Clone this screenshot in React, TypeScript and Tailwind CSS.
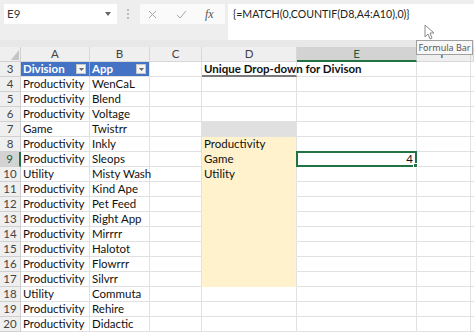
import React from "react";

const cols = ["A", "B", "C", "D", "E", "F", ""];

type Row = { n: number; a: string; b: string; d?: string; e?: string };

const rows: Row[] = [
  { n: 4, a: "Productivity", b: "WenCaL" },
  { n: 5, a: "Productivity", b: "Blend" },
  { n: 6, a: "Productivity", b: "Voltage" },
  { n: 7, a: "Game", b: "Twistrr" },
  { n: 8, a: "Productivity", b: "Inkly", d: "Productivity" },
  { n: 9, a: "Productivity", b: "Sleops", d: "Game", e: "4" },
  { n: 10, a: "Utility", b: "Misty Wash", d: "Utility" },
  { n: 11, a: "Productivity", b: "Kind Ape" },
  { n: 12, a: "Productivity", b: "Pet Feed" },
  { n: 13, a: "Productivity", b: "Right App" },
  { n: 14, a: "Productivity", b: "Mirrrr" },
  { n: 15, a: "Productivity", b: "Halotot" },
  { n: 16, a: "Productivity", b: "Flowrrr" },
  { n: 17, a: "Productivity", b: "Silvrr" },
  { n: 18, a: "Utility", b: "Commuta" },
  { n: 19, a: "Productivity", b: "Rehire" },
  { n: 20, a: "Productivity", b: "Didactic" },
];

const gridCols = "grid grid-cols-[21px_69px_60px_52px_95px_120px_54px_1fr]";
const cell = "h-[15px] border-r border-b border-[#e1e1e1] px-[2px] leading-[14px] whitespace-nowrap overflow-visible";

function DropBtn() {
  return (
    <span className="ml-auto mr-[3px] flex h-[10px] w-[10px] items-center justify-center bg-[#f4f4f4] border border-[#c8c8c8]">
      <svg width="5" height="3" viewBox="0 0 5 3">
        <path d="M0 0 L5 0 L2.5 3 Z" fill="#666" />
      </svg>
    </span>
  );
}

export default function App() {
  return (
    <div
      className="relative h-[332px] w-[474px] overflow-hidden bg-white text-[11.5px] text-[#111]"
      style={{ fontFamily: "Lato, 'Noto Sans', sans-serif" }}
    >
      {/* Toolbar */}
      <div className="h-[47px] bg-[#eeeeee] flex flex-col">
        <div className="flex items-start pt-[4px] h-[40px]">
          <div className="ml-[4px] flex h-[20px] w-[113px] items-center bg-white pl-[3px] text-[#333]">
            <span>E9</span>
            <svg className="ml-auto mr-[6px]" width="6" height="4" viewBox="0 0 6 4">
              <path d="M0 0 L6 0 L3 4 Z" fill="#666" />
            </svg>
          </div>
          <div className="ml-[10px] mt-[5px] flex flex-col gap-[2px]">
            <span className="block h-[2px] w-[2px] bg-[#bbb]" />
            <span className="block h-[2px] w-[2px] bg-[#bbb]" />
            <span className="block h-[2px] w-[2px] bg-[#bbb]" />
          </div>
          <div className="ml-[11px] flex h-[20px] w-[85px] items-center bg-[#fafafa]">
            <svg className="ml-[8px]" width="9" height="9" viewBox="0 0 9 9">
              <path d="M1 1 L8 8 M8 1 L1 8" stroke="#a6a6a6" strokeWidth="1" />
            </svg>
            <svg className="ml-[19px]" width="11" height="9" viewBox="0 0 11 9">
              <path d="M1 5 L4 8 L10 1" stroke="#a6a6a6" strokeWidth="1" fill="none" />
            </svg>
            <span
              className="ml-[18px] text-[12px] italic text-[#555]"
              style={{ fontFamily: "'Liberation Serif', serif" }}
            >
              fx
            </span>
          </div>
          <div className="ml-[3px] h-[36px] flex-1 bg-white pl-[5px] pt-[3px] text-[10.6px] leading-[14px] text-[#222]">
            {"{=MATCH(0,COUNTIF(D8,A4:A10),0)}"}
          </div>
        </div>
        <div className="flex-1 bg-[#e8e8e8]" />
      </div>

      {/* Column headers */}
      <div className={`${gridCols} bg-[#efefef] text-[#444]`}>
        <div className="relative h-[15px] border-r border-b border-[#d0d0d0]">
          <svg className="absolute right-[1px] bottom-[1px]" width="8" height="10" viewBox="0 0 8 10">
            <path d="M8 0 L8 10 L0 10 Z" fill="#c4c4c4" />
          </svg>
        </div>
        {cols.map((c, i) => (
          <div
            key={i}
            className={
              c === "E"
                ? "h-[15px] border-r border-[#d0d0d0] border-b-2 border-b-[#217346] bg-[#d3d3d3] text-center leading-[14px] text-[#1e5c38]"
                : "h-[15px] border-r border-b border-[#d8d8d8] text-center leading-[14px]"
            }
          >
            {c}
          </div>
        ))}
      </div>

      {/* Row 3 */}
      <div className={gridCols}>
        <div className="h-[15px] border-r border-b border-[#d0d0d0] bg-[#efefef] text-center leading-[14px] text-[#444]">3</div>
        <div className="flex h-[15px] items-center border-r border-b border-r-[#8eaadb] border-b-[#e1e1e1] bg-[#4472c4] pl-[2px] font-bold text-white">
          <span>Division</span>
          <DropBtn />
        </div>
        <div className="flex h-[15px] items-center border-r border-b border-[#e1e1e1] bg-[#4472c4] pl-[2px] font-bold text-white">
          <span>App</span>
          <DropBtn />
        </div>
        <div className={cell} />
        <div className="h-[15px] border-r border-r-[#e1e1e1] border-b-2 border-b-[#7a7a7a] px-[2px] leading-[14px] whitespace-nowrap font-bold">
          Unique Drop-down for Divison
        </div>
        <div className={cell} />
        <div className={cell} />
        <div className={cell} />
      </div>

      {rows.map((r) => {
        const sel = r.n === 9;
        const yellow = r.n >= 8 && r.n <= 17;
        const gray = r.n === 7;
        return (
          <div key={r.n} className={gridCols}>
            <div
              className={
                sel
                  ? "h-[15px] border-b border-[#d0d0d0] border-r-2 border-r-[#217346] bg-[#d3d3d3] text-center leading-[14px] text-[#1e5c38]"
                  : "h-[15px] border-r border-b border-[#d0d0d0] bg-[#efefef] text-center leading-[14px] text-[#444]"
              }
            >
              {r.n}
            </div>
            <div className={cell}>{r.a}</div>
            <div className={cell}>{r.b}</div>
            <div className={cell} />
            <div
              className={
                yellow
                  ? `${cell} bg-[#fff2cc] border-[#fff2cc] border-r-[#e1e1e1]`
                  : gray
                  ? `${cell} bg-[#e0e0e0] border-[#e0e0e0]`
                  : cell
              }
            >
              {r.d ?? ""}
            </div>
            {sel ? (
              <div className="relative h-[15px] border-2 border-[#217346] -mt-[1px] -ml-[1px] h-[16px] px-[2px] text-right leading-[12px]">
                {r.e}
                <span className="absolute -right-[3px] -bottom-[3px] h-[5px] w-[5px] bg-[#217346] border border-white" />
              </div>
            ) : (
              <div className={cell} />
            )}
            <div className={cell} />
            <div className={cell} />
          </div>
        );
      })}

      {/* Mouse cursor */}
      <svg className="absolute left-[424px] top-[24px]" width="11" height="16" viewBox="0 0 11 16">
        <path
          d="M1 1 L1 13 L4 10 L6 15 L8 14 L6 9 L10 9 Z"
          fill="#ffffff"
          stroke="#8a8a8a"
          strokeWidth="1"
          strokeLinejoin="round"
        />
      </svg>

      {/* Tooltip */}
      <div
        className="absolute left-[416px] top-[40px] flex h-[15px] w-[57px] items-center justify-center whitespace-nowrap border border-[#a0a0a0] bg-[#f7f7f7] text-[9px] leading-[12px] text-[#575757]"
        style={{ fontFamily: "'Noto Sans', sans-serif" }}
      >
        Formula Bar
      </div>
    </div>
  );
}
